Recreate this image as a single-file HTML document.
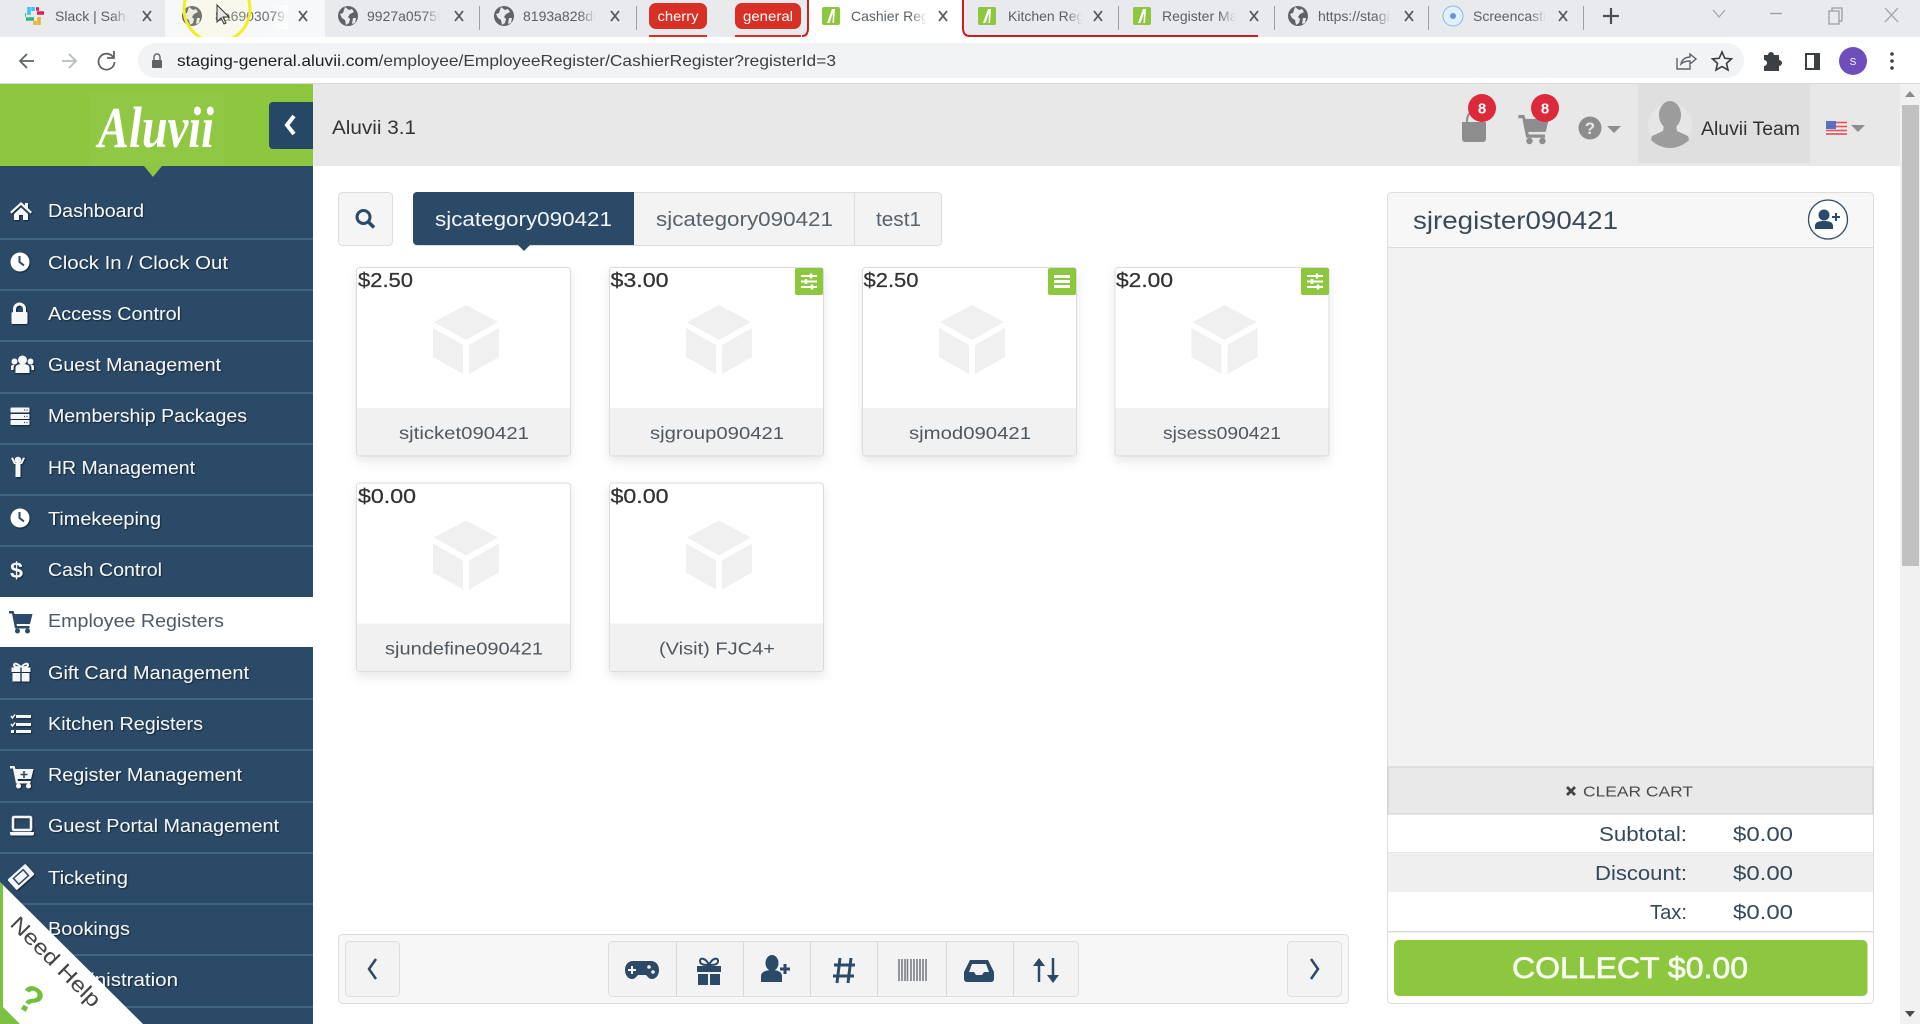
<!DOCTYPE html>
<html lang="en"><head><meta charset="utf-8"><title>Cashier Register</title>
<style>html,body{margin:0;padding:0;background:#fff;overflow:hidden}svg{display:block}text{font-family:"Liberation Sans",sans-serif}</style></head>
<body>
<svg xmlns="http://www.w3.org/2000/svg" width="1920" height="1024" viewBox="0 0 1920 1024">
<defs>
<linearGradient id="fg" x1="0" x2="1" y1="0" y2="0"><stop offset="0" stop-color="#e8eaed" stop-opacity="0"/><stop offset="1" stop-color="#e8eaed"/></linearGradient>
<linearGradient id="fw" x1="0" x2="1" y1="0" y2="0"><stop offset="0" stop-color="#fff" stop-opacity="0"/><stop offset="1" stop-color="#fff"/></linearGradient>
<filter id="cs" x="-10%" y="-10%" width="120%" height="125%"><feDropShadow dx="0" dy="5" stdDeviation="5" flood-color="#000" flood-opacity=".09"/></filter>
<filter id="ts" x="-5%" y="-5%" width="110%" height="110%"><feDropShadow dx="1" dy="1" stdDeviation=".7" flood-color="#000" flood-opacity=".55"/></filter>
<g id="globe"><circle r="10" fill="#5f6368"/><path d="M-3-9l4 3 3-1 2 3-4 2-2 3 2 2-1 4-3 2-1-5-3-2-2-4 3-1z M5 2l3 0-1 5-3 1z" fill="#e8eaed"/></g>
<g id="al"><rect x="-9" y="-9" width="18" height="18" rx="2" fill="#8dc63f"/><path d="M-4 7L1-7h3L3 7H1.500L2-3-1.500 7z" fill="#fff"/></g>
<g id="x"><path d="M-4-5L4 5M4-5L-4 5" stroke="#55595e" stroke-width="1.800" fill="none"/></g>
<g id="cube"><path d="M0-34L32-17 0 1-32-17z M-33-11L-3 6V35L-33 18z M33-11L3 6V35L33 18z" fill="#f0f0f0"/></g>
<g id="card"><rect x=".5" y=".5" width="214" height="188.500" rx="3" fill="#fff" stroke="#dcdcdc" filter="url(#cs)"/><path d="M1 141H214V186.500a2 2 0 0 1-2 2H3a2 2 0 0 1-2-2z" fill="#f1f1f1"/><use href="#cube" x="110" y="72"/></g>
<g id="sliders"><rect width="28" height="27" fill="#8dc63f" rx="2"/><path d="M6 8H22M6 13.500H22M6 19H22" stroke="#fff" stroke-width="2"/><path d="M16 5.500v5M11 11v5M17 16.500v5" stroke="#fff" stroke-width="2.500"/></g>
<g id="list"><rect width="28" height="27" fill="#8dc63f" rx="2"/><path d="M6 8.500H22M6 13.500H22M6 18.500H22" stroke="#fff" stroke-width="3"/></g>
<g id="clock"><circle r="9.500" fill="#fff"/><path d="M-.5-6V0L4 3.500" stroke="#2b4a67" stroke-width="2" fill="none"/></g>
<g id="cart"><path d="M-12-10H-7.500L-6.500-7H11.500L9 3H-4.500L-4 5H8.500V7.500H-6L-9-7.500H-12z" /><circle cx="-3.500" cy="10" r="2.500"/><circle cx="6.500" cy="10" r="2.500"/></g>
</defs>

<!-- browser tab strip -->
<rect width="1920" height="37" fill="#e8eaed"/>
<rect x="165" y="0" width="160" height="37" fill="#f7f8f9"/>
<rect x="808" y="0" width="155" height="37" fill="#fff"/>
<g fill="#5a6066" font-size="14">
<g fill="none"><path d="M29 7v8M33 7v4" stroke="#36c5f0" stroke-width="3.500"/><path d="M37 13h7M39 9h-3" stroke="#e01e5a" stroke-width="3.500"/><path d="M39 17v8M35 21v4" stroke="#ecb22e" stroke-width="3.500"/><path d="M26 19h8M26 15h-1" stroke="#2eb67d" stroke-width="3.500"/></g>
<svg x="55" y="0" width="72" height="37"><text x="0" y="21" fill="#5a6066" font-size="14">Slack | Sahil</text></svg><rect x="112" y="5" width="16" height="24" fill="url(#fg)"/><use href="#x" x="147" y="16"/>
<use href="#globe" x="192" y="16"/><svg x="215" y="0" width="73" height="37"><text x="0" y="21" fill="#6b7076" font-size="14">8a6903079b</text></svg><rect x="272" y="5" width="16" height="24" fill="url(#fw)"/><use href="#x" x="303" y="16"/>
<use href="#globe" x="348" y="16"/><svg x="367" y="0" width="73" height="37"><text x="0" y="21" fill="#5a6066" font-size="14">9927a0575f</text></svg><rect x="424" y="5" width="16" height="24" fill="url(#fg)"/><use href="#x" x="459" y="16"/>
<rect x="479" y="6" width="1" height="24" fill="#9aa0a6"/>
<use href="#globe" x="504" y="16"/><svg x="523" y="0" width="73" height="37"><text x="0" y="21" fill="#5a6066" font-size="14">8193a828d6</text></svg><rect x="580" y="5" width="16" height="24" fill="url(#fg)"/><use href="#x" x="615" y="16"/>
<rect x="636" y="6" width="1" height="24" fill="#9aa0a6"/>
<rect x="649" y="3" width="58" height="26" rx="7" fill="#d93025"/><text x="678" y="21" text-anchor="middle" fill="#fff" font-size="14" textLength="41" lengthAdjust="spacingAndGlyphs">cherry</text><rect x="649" y="35" width="58" height="2" fill="#d93025"/>
<rect x="735" y="3" width="66" height="26" rx="7" fill="#d93025"/><text x="768" y="21" text-anchor="middle" fill="#fff" font-size="14" textLength="50" lengthAdjust="spacingAndGlyphs">general</text><rect x="735" y="35" width="66" height="2" fill="#d93025"/>
<path d="M802 36Q808 36 808 28V0M963 0V28Q963 36 970 36H1258" fill="none" stroke="#c5221f" stroke-width="2"/>
<use href="#al" x="831" y="16"/><svg x="851" y="0" width="76" height="37"><text x="0" y="21" fill="#5a6066" font-size="14">Cashier Register</text></svg><rect x="910" y="5" width="17" height="24" fill="url(#fw)"/><use href="#x" x="943" y="16"/>
<use href="#al" x="987" y="16"/><svg x="1008" y="0" width="75" height="34"><text x="0" y="21" fill="#5a6066" font-size="14">Kitchen Register</text></svg><rect x="1066" y="5" width="17" height="24" fill="url(#fg)"/><use href="#x" x="1098" y="16"/>
<rect x="1118" y="6" width="1" height="24" fill="#9aa0a6"/>
<use href="#al" x="1142" y="16"/><svg x="1162" y="0" width="74" height="34"><text x="0" y="21" fill="#5a6066" font-size="14">Register Manage</text></svg><rect x="1219" y="5" width="17" height="24" fill="url(#fg)"/><use href="#x" x="1254" y="16"/>
<rect x="1274" y="6" width="1" height="24" fill="#9aa0a6"/>
<use href="#globe" x="1298" y="16"/><svg x="1318" y="0" width="73" height="37"><text x="0" y="21" fill="#5a6066" font-size="14">https://staging</text></svg><rect x="1375" y="5" width="16" height="24" fill="url(#fg)"/><use href="#x" x="1409" y="16"/>
<rect x="1428" y="6" width="1" height="24" fill="#9aa0a6"/>
<circle cx="1453" cy="16" r="10" fill="#e3f0fb" stroke="#8ab8e0"/><circle cx="1453" cy="16" r="3" fill="#5b9bd5"/><svg x="1473" y="0" width="73" height="37"><text x="0" y="21" fill="#5a6066" font-size="14">Screencastify</text></svg><rect x="1530" y="5" width="16" height="24" fill="url(#fg)"/><use href="#x" x="1563" y="16"/>
<rect x="1583" y="6" width="1" height="24" fill="#9aa0a6"/>
</g>
<path d="M1611 8v16M1603 16h16" stroke="#4a4f55" stroke-width="2.200"/>
<path d="M1713 10l6 7 6-7" fill="none" stroke="#a4a8ad" stroke-width="1.300"/>
<path d="M1770 13.500h12" stroke="#9a9ea3" stroke-width="1.300"/>
<path d="M1829 11h10v13h-10zM1832 11V8h10v13h-3" fill="none" stroke="#9a9ea3" stroke-width="1.300"/>
<path d="M1885 8l13 14M1898 8l-13 14" stroke="#a4a8ad" stroke-width="1.300"/>

<!-- yellow click highlight and cursor -->
<circle cx="217" cy="9" r="33" fill="#ffff90" fill-opacity=".12" stroke="#f2ee22" stroke-width="3"/>
<path d="M217 5V22L221 18L224 24L226 23L223 17L229 17Z" fill="#e8e8e8" stroke="#333" stroke-width="1"/>

<!-- address bar -->
<rect y="37" width="1920" height="47" fill="#fff"/>
<rect y="83" width="1920" height="1" fill="#dadce0"/>
<rect x="138" y="43" width="1606" height="35" rx="17.500" fill="#f1f3f4"/>
<path d="M34 61H21M27 54l-7 7 7 7" fill="none" stroke="#5f6368" stroke-width="1.800"/>
<path d="M62 61H75M69 54l7 7-7 7" fill="none" stroke="#b8bbbf" stroke-width="1.800"/>
<path d="M113 57a8 8 0 1 0 1.500 5M114 51v7h-7" fill="none" stroke="#5f6368" stroke-width="1.800"/>
<rect x="152" y="60" width="10" height="8" rx="1" fill="#5f6368"/><path d="M154 60v-3a3 3 0 0 1 6 0v3" fill="none" stroke="#5f6368" stroke-width="1.400"/>
<text x="177" y="66" font-size="16" fill="#3c4043" textLength="659" lengthAdjust="spacingAndGlyphs"><tspan fill="#202124">staging-general.aluvii.com</tspan>/employee/EmployeeRegister/CashierRegister?registerId=3</text>
<path d="M1677 58v11h13v-4M1681 64c1-5 5-7 9-7v-3l6 5-6 5v-3c-4 0-7 1-9 3z" fill="none" stroke="#5f6368" stroke-width="1.400"/>
<path d="M1722 52l2.800 6.300 6.700.6-5 4.500 1.500 6.600-6-3.500-6 3.500 1.500-6.600-5-4.500 6.700-.6z" fill="none" stroke="#3c4043" stroke-width="1.600"/>
<path d="M1764 55h4a3 3 0 0 1 6 0h5v5a3 3 0 0 1 0 6v5h-15v-5a3 3 0 0 0 0-6z" fill="#3c4043"/>
<rect x="1806" y="54" width="13" height="15" fill="none" stroke="#3c4043" stroke-width="2"/><rect x="1814" y="54" width="5" height="15" fill="#3c4043"/>
<circle cx="1853" cy="61" r="14" fill="#6f4ebb"/><text x="1853" y="65" text-anchor="middle" fill="#fff" font-size="10">S</text>
<circle cx="1892" cy="54" r="1.800" fill="#3c4043"/><circle cx="1892" cy="61" r="1.800" fill="#3c4043"/><circle cx="1892" cy="68" r="1.800" fill="#3c4043"/>

<!-- app header -->
<rect x="313" y="84" width="1587" height="82" fill="#e8e8e8"/>
<rect x="0" y="84" width="313" height="83" fill="#8dc63f"/>
<rect x="90" y="93" width="135" height="73" fill="#90c845"/>
<text x="98" y="147" font-size="58" font-weight="bold" font-style="italic" fill="#fff" textLength="116" lengthAdjust="spacingAndGlyphs" style="font-family:'Liberation Serif',serif">Aluvii</text>
<path d="M269 106a4 4 0 0 1 4-4H313V149H273a4 4 0 0 1-4-4z" fill="#274766"/>
<path d="M294 116l-7 9 7 9" fill="none" stroke="#fff" stroke-width="4"/>
<text x="332" y="134" font-size="19" fill="#333" textLength="84" lengthAdjust="spacingAndGlyphs">Aluvii 3.1</text>
<path d="M1462 122h24v17a3 3 0 0 1-3 3h-18a3 3 0 0 1-3-3z" fill="#8d8d8d"/><path d="M1467 122c0-7 2-10 7-10s7 3 7 10" fill="none" stroke="#8d8d8d" stroke-width="2"/>
<circle cx="1482" cy="108" r="14" fill="#dc2a3c"/><text x="1482" y="113.500" text-anchor="middle" fill="#fff" font-weight="bold" font-size="15">8</text>
<g fill="#8d8d8d" transform="translate(1534,128) scale(1.300)"><use href="#cart"/></g>
<circle cx="1545" cy="108" r="14" fill="#dc2a3c"/><text x="1545" y="113.500" text-anchor="middle" fill="#fff" font-weight="bold" font-size="15">8</text>
<circle cx="1590" cy="128" r="11.500" fill="#8d8d8d"/><text x="1590" y="134" text-anchor="middle" fill="#e8e8e8" font-weight="bold" font-size="17">?</text>
<path d="M1607 126h14l-7 7z" fill="#8d8d8d"/>
<rect x="1638" y="84" width="172" height="79" fill="#dfdfdf"/>
<circle cx="1670" cy="125" r="22" fill="#e6e6e6"/>
<ellipse cx="1670" cy="115" rx="11" ry="14" fill="#9c9c9c"/><path d="M1664 125h12l1 6 11 5 1 4c-5 5-12 8-19 8s-14-3-19-8l1-4 11-5z" fill="#9c9c9c"/>
<text x="1701" y="135" font-size="19" fill="#333" textLength="99" lengthAdjust="spacingAndGlyphs">Aluvii Team</text>
<rect x="1826" y="121" width="21" height="14" fill="#f2f2f2"/><path d="M1826 122.500h21M1826 126.500h21M1826 130.500h21M1826 134h21" stroke="#e2575a" stroke-width="1.800"/><rect x="1826" y="121" width="10" height="8" fill="#5a6fc0"/>
<path d="M1851 125h14l-7 7z" fill="#8d8d8d"/>

<!-- scrollbar -->
<rect x="1900" y="84" width="20" height="940" fill="#f1f1f1"/>
<rect x="1902" y="105" width="17" height="461" fill="#c1c1c1"/>
<path d="M1910 91l5 6h-10z" fill="#8a8a8a"/><path d="M1905 1011h10l-5 6z" fill="#4a4a4a"/>

<!-- sidebar -->
<rect x="0" y="166" width="313" height="858" fill="#2b4a67"/>
<path d="M144 166h18l-9 11z" fill="#8dc63f"/>
<g fill="#416485">
<rect y="238" width="313" height="2"/><rect y="289" width="313" height="2"/><rect y="340" width="313" height="2"/><rect y="392" width="313" height="2"/><rect y="443" width="313" height="2"/><rect y="494" width="313" height="2"/><rect y="545" width="313" height="2"/>
<rect y="698" width="313" height="2"/><rect y="749" width="313" height="2"/><rect y="801" width="313" height="2"/><rect y="852" width="313" height="2"/><rect y="903" width="313" height="2"/><rect y="954" width="313" height="2"/><rect y="1006" width="313" height="2"/>
</g>
<rect y="597" width="320" height="50" fill="#fff"/>
<g filter="url(#ts)" fill="#f4f6f8" font-size="18">
<text x="48" y="217" textLength="96" lengthAdjust="spacingAndGlyphs">Dashboard</text>
<text x="48" y="269" textLength="180" lengthAdjust="spacingAndGlyphs">Clock In / Clock Out</text>
<text x="48" y="320" textLength="133" lengthAdjust="spacingAndGlyphs">Access Control</text>
<text x="48" y="371" textLength="173" lengthAdjust="spacingAndGlyphs">Guest Management</text>
<text x="48" y="422" textLength="199" lengthAdjust="spacingAndGlyphs">Membership Packages</text>
<text x="48" y="474" textLength="147" lengthAdjust="spacingAndGlyphs">HR Management</text>
<text x="48" y="525" textLength="113" lengthAdjust="spacingAndGlyphs">Timekeeping</text>
<text x="48" y="576" textLength="114" lengthAdjust="spacingAndGlyphs">Cash Control</text>
<text x="48" y="679" textLength="201" lengthAdjust="spacingAndGlyphs">Gift Card Management</text>
<text x="48" y="730" textLength="155" lengthAdjust="spacingAndGlyphs">Kitchen Registers</text>
<text x="48" y="781" textLength="194" lengthAdjust="spacingAndGlyphs">Register Management</text>
<text x="48" y="832" textLength="231" lengthAdjust="spacingAndGlyphs">Guest Portal Management</text>
<text x="48" y="884" textLength="80" lengthAdjust="spacingAndGlyphs">Ticketing</text>
<text x="48" y="935" textLength="82" lengthAdjust="spacingAndGlyphs">Bookings</text>
<text x="48" y="986" textLength="130" lengthAdjust="spacingAndGlyphs">Administration</text>
<!-- icons -->
<path transform="translate(21,211)" d="M-11 1L0-9 4-5.500V-8H7V-2.800L11 1 9.500 2.500 0-6-9.500 2.500ZM-7 3L0-3.500 7 3V9H2V4H-2V9H-7Z"/>
<use href="#clock" x="20" y="262"/>
<g transform="translate(19.500,314)"><rect x="-8" y="-2" width="16" height="12" rx="1.500"/><path d="M-5-2V-5a5 5 0 0 1 10 0V-2" fill="none" stroke="#f4f6f8" stroke-width="3"/></g>
<g transform="translate(22.500,365)"><circle cx="0" cy="-5" r="4.500"/><circle cx="-8" cy="-3.500" r="3"/><circle cx="8" cy="-3.500" r="3"/><path d="M-7 8V3C-7 0-4-1 0-1S7 0 7 3V8Z"/><path d="M-11.500 5V2C-11.500 0-10-.5-8 0-9 1-9 3-9 5ZM11.500 5V2C11.500 0 10-.5 8 0 9 1 9 3 9 5Z"/></g>
<g transform="translate(20,416)"><rect x="-9.500" y="-8.500" width="19" height="5" rx="1"/><rect x="-9.500" y="-2" width="19" height="5" rx="1"/><rect x="-9.500" y="4" width="19" height="5" rx="1"/><path d="M4-6h1M6.500-6h1M4 .5h1M6.500 .5h1M4 6.500h1M6.500 6.500h1" stroke="#2b4a67" stroke-width="1.200"/></g>
<g transform="translate(18,467)"><circle cx="0" cy="-7" r="3.300"/><path d="M-7-9L-4-3H-2.500V10H2.500V-3H4L7-9 5-9.500 2.500-4H-2.500L-5-9.500Z"/></g>
<use href="#clock" x="20" y="518"/>
<text x="10" y="578" font-size="22" font-weight="bold" textLength="13" lengthAdjust="spacingAndGlyphs">$</text>
<g transform="translate(21,672)"><rect x="-9.500" y="-4.500" width="19" height="4.500"/><rect x="-8.500" y="1" width="17" height="8.500"/><path d="M0-4.500c-3-4-7-5-7-2.500s4 2.500 7 2.500c3 0 7 0 7-2.500s-4-1.500-7 2.500z" fill="none" stroke="#f4f6f8" stroke-width="2"/><path d="M0-4.500V9.500" stroke="#2b4a67" stroke-width="1.500"/></g>
<g transform="translate(21,724)"><path d="M-5-7.500H10M-5 .5H10M-5 7.500H10" stroke="#f4f6f8" stroke-width="3"/><path d="M-10-8L-8.500-6-6-9.500M-10 0L-8.500 2-6-1.500" fill="none" stroke="#f4f6f8" stroke-width="1.500"/><rect x="-10" y="6" width="3" height="3"/></g>
<g transform="translate(22,776)"><use href="#cart"/><path d="M2-5V2M-1.500-1.500H5.500" stroke="#2b4a67" stroke-width="1.600"/></g>
<g transform="translate(22,826)"><rect x="-9" y="-9" width="18" height="13" rx="1" fill="none" stroke="#f4f6f8" stroke-width="2.500"/><path d="M-12 6H12V7.500A2 2 0 0 1 10 9.500H-10A2 2 0 0 1-12 7.500Z"/></g>
<g transform="translate(21,877) rotate(-42)"><rect x="-12" y="-7" width="24" height="14" rx="1"/><rect x="-6.500" y="-4" width="13" height="8" fill="none" stroke="#2b4a67" stroke-width="1.500"/></g>
</g>
<g transform="translate(21,621)" fill="#2b4a67"><use href="#cart"/></g>
<text x="48" y="627" font-size="18" fill="#4d5a64" textLength="176" lengthAdjust="spacingAndGlyphs">Employee Registers</text>

<!-- search + category tabs -->
<rect x="338.500" y="192.500" width="54" height="53" rx="4" fill="#f5f5f5" stroke="#ddd"/>
<circle cx="363.500" cy="217" r="6.500" fill="none" stroke="#2b4a67" stroke-width="3"/><path d="M368.500 222l5.500 5.500" stroke="#2b4a67" stroke-width="3.500"/>
<rect x="413.500" y="192.500" width="528" height="53" rx="4" fill="#f3f3f3" stroke="#ddd"/>
<path d="M417 192H634V245H417a4 4 0 0 1-4-4V196a4 4 0 0 1 4-4z" fill="#2b4a67"/>
<path d="M518 245h12l-6 6z" fill="#2b4a67"/>
<rect x="854" y="193" width="1" height="52" fill="#ddd"/>
<text x="435" y="226" font-size="20" fill="#f2f5f7" textLength="177" lengthAdjust="spacingAndGlyphs">sjcategory090421</text>
<text x="656" y="226" font-size="20" fill="#58626b" textLength="177" lengthAdjust="spacingAndGlyphs">sjcategory090421</text>
<text x="876" y="226" font-size="20" fill="#58626b" textLength="45" lengthAdjust="spacingAndGlyphs">test1</text>

<!-- product cards -->
<use href="#card" x="356" y="267"/><use href="#card" x="609" y="267"/><use href="#card" x="862" y="267"/><use href="#card" x="1114.500" y="267"/>
<use href="#card" x="356" y="482.500"/><use href="#card" x="609" y="482.500"/>
<use href="#sliders" x="795" y="268"/><use href="#list" x="1048" y="268"/><use href="#sliders" x="1301" y="268"/>
<g font-size="20" fill="#333" stroke="#333" stroke-width=".25">
<text x="358" y="287" textLength="55" lengthAdjust="spacingAndGlyphs">$2.50</text>
<text x="610.500" y="287" textLength="58" lengthAdjust="spacingAndGlyphs">$3.00</text>
<text x="863.500" y="287" textLength="55" lengthAdjust="spacingAndGlyphs">$2.50</text>
<text x="1116" y="287" textLength="57" lengthAdjust="spacingAndGlyphs">$2.00</text>
<text x="358" y="503" textLength="58" lengthAdjust="spacingAndGlyphs">$0.00</text>
<text x="610.500" y="503" textLength="58" lengthAdjust="spacingAndGlyphs">$0.00</text>
</g>
<g font-size="17.500" fill="#4f5860">
<text x="399" y="439" textLength="130" lengthAdjust="spacingAndGlyphs">sjticket090421</text>
<text x="650" y="439" textLength="134" lengthAdjust="spacingAndGlyphs">sjgroup090421</text>
<text x="909" y="439" textLength="122" lengthAdjust="spacingAndGlyphs">sjmod090421</text>
<text x="1163" y="439" textLength="118" lengthAdjust="spacingAndGlyphs">sjsess090421</text>
<text x="385" y="654.500" textLength="158" lengthAdjust="spacingAndGlyphs">sjundefine090421</text>
<text x="659" y="654.500" textLength="116" lengthAdjust="spacingAndGlyphs">(Visit) FJC4+</text>
</g>

<!-- bottom toolbar -->
<rect x="338.500" y="934.500" width="1010" height="69" rx="4" fill="#f7f7f7" stroke="#ddd"/>
<rect x="345.500" y="941.500" width="54" height="55" rx="4" fill="#f3f3f3" stroke="#ddd"/>
<path d="M376 959l-7 10 7 10" fill="none" stroke="#2b4a67" stroke-width="2.500"/>
<rect x="1287.500" y="941.500" width="54" height="55" rx="4" fill="#f3f3f3" stroke="#ddd"/>
<path d="M1311 959l7 10-7 10" fill="none" stroke="#2b4a67" stroke-width="2.500"/>
<rect x="608.500" y="941.500" width="470" height="55" rx="4" fill="#f3f3f3" stroke="#ddd"/>
<path d="M676.500 942v54M743.500 942v54M810.500 942v54M877.500 942v54M946.500 942v54M1013.500 942v54" stroke="#d8d8d8"/>
<g fill="#2b4a67" stroke="none">
<path d="M633 961h18c5 0 8 4 8 9s-3 9-7 9c-3 0-4-2-6-4h-8c-2 2-3 4-6 4-4 0-7-4-7-9s3-9 8-9z"/>
<path d="M632 966v8M628 970h8" stroke="#f3f3f3" stroke-width="2"/><circle cx="649" cy="967" r="1.800" fill="#f3f3f3"/><circle cx="653" cy="972" r="1.800" fill="#f3f3f3"/>
<rect x="697" y="966" width="24" height="6"/><rect x="698" y="974" width="10" height="11"/><rect x="710" y="974" width="10" height="11"/>
<path d="M709 965c-3-7-9-8-9-4s5 4 9 4c4 0 9 0 9-4s-6-3-9 4z" fill="none" stroke="#2b4a67" stroke-width="2"/>
<ellipse cx="772" cy="963" rx="6.500" ry="8"/><path d="M761 982v-6c0-4 5-6 11-6s10 2 10 6v6z"/><path d="M785 964v10M780 969h10" stroke="#2b4a67" stroke-width="3"/>
<path d="M840 958l-3 25M851 958l-3 25M834 965h21M833 976h21" stroke="#2b4a67" stroke-width="3" fill="none"/>
<path d="M899 959v22M902 959v22M905 959v22M907.500 959v22M911 959v22M914 959v22M917 959v22M920 959v22M923 959v22M926 959v22" stroke="#7a7f85" stroke-width="1.600"/>
<path d="M970 960h18l6 12v7a3 3 0 0 1-3 3h-24a3 3 0 0 1-3-3v-7z"/><path d="M972 964h14l3 8h-5l-2 3h-6l-2-3h-5z" fill="#f3f3f3"/>
<path d="M1039 982V961M1053 958v21" stroke="#2b4a67" stroke-width="2.500"/><path d="M1033 966l6-8 6 8zM1047 975h12l-6 8z"/>
</g>

<!-- cart panel -->
<rect x="1387.500" y="192.500" width="486" height="811" rx="4" fill="#fff" stroke="#ddd"/>
<path d="M1392 193H1869a4 4 0 0 1 4 4V247H1388V197a4 4 0 0 1 4-4z" fill="#f7f7f7"/>
<rect x="1388" y="247" width="485" height="1" fill="#dcdcdc"/>
<rect x="1388" y="248" width="485" height="519" fill="#f2f2f2"/>
<text x="1413" y="229" font-size="25" fill="#3a4a58" textLength="205" lengthAdjust="spacingAndGlyphs">sjregister090421</text>
<circle cx="1828" cy="219.500" r="19.500" fill="#fff" stroke="#2b4a67" stroke-width="1.300"/>
<circle cx="1824" cy="215" r="5.500" fill="#2b4a67"/><path d="M1815 229v-3c0-4 4-5 9-5s9 1 9 5v3z" fill="#2b4a67"/><path d="M1836 213v8M1832 217h8" stroke="#2b4a67" stroke-width="2"/>
<rect x="1388" y="767" width="485" height="47" fill="#e9e9e9" stroke="#cfcfcf"/>
<path d="M1567 787l8 8M1575 787l-8 8" stroke="#444" stroke-width="2.800"/>
<text x="1583" y="796.500" font-size="15" fill="#4a4a4a" textLength="110" lengthAdjust="spacingAndGlyphs">CLEAR CART</text>
<rect x="1388" y="853" width="485" height="39" fill="#efefef"/>
<rect x="1388" y="852" width="485" height="1" fill="#e6e6e6"/><rect x="1388" y="931" width="485" height="1.500" fill="#dcdcdc"/>
<g font-size="20" fill="#35495a">
<text x="1599" y="841" textLength="88" lengthAdjust="spacingAndGlyphs">Subtotal:</text>
<text x="1733" y="841" textLength="60" lengthAdjust="spacingAndGlyphs">$0.00</text>
<text x="1595" y="880" textLength="92" lengthAdjust="spacingAndGlyphs">Discount:</text>
<text x="1733" y="880" textLength="60" lengthAdjust="spacingAndGlyphs">$0.00</text>
<text x="1650" y="919" textLength="37" lengthAdjust="spacingAndGlyphs">Tax:</text>
<text x="1733" y="919" textLength="60" lengthAdjust="spacingAndGlyphs">$0.00</text>
</g>
<rect x="1394" y="940" width="473.500" height="56" rx="5" fill="#8dc63f"/>
<text x="1512" y="978" font-size="30" fill="#f6fbef" stroke="#f6fbef" stroke-width=".7" textLength="236" lengthAdjust="spacingAndGlyphs">COLLECT $0.00</text>

<!-- need help ribbon -->
<path d="M0 882L143 1024H0Z" fill="#fff"/>
<path d="M0 882L3 885V1024H0Z" fill="#7cc242"/>
<path d="M0 1004L20 1024H0Z" fill="#7cc242"/>
<text transform="translate(9,925) rotate(45)" font-size="21" fill="#444" textLength="118" lengthAdjust="spacingAndGlyphs">Need Help</text>
<text transform="translate(14,1005) rotate(30)" font-size="38" font-weight="bold" fill="#72bf3b">?</text>
</svg>
</body></html>
